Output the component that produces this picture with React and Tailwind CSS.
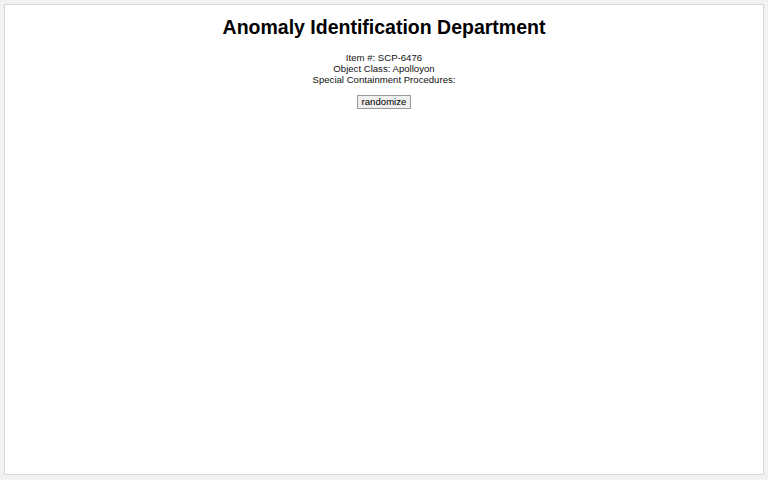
export default function App() {
  return (
    <div className="h-[480px] w-[768px] bg-[#f2f2f2] p-1 font-['Liberation_Sans',Arial,sans-serif]">
      <div className="flex h-[471px] flex-col items-center border border-[#d8d8d8] bg-white">
        <h1 className="mt-[11px] text-[19.5px] font-bold leading-[23px] text-black">
          Anomaly Identification Department
        </h1>
        <div className="mt-[13px] flex flex-col items-center text-[9.6px] leading-[11px] text-[#111]">
          <p>Item #: SCP-6476</p>
          <p>Object Class: Apolloyon</p>
          <p>Special Containment Procedures:</p>
        </div>
        <button className="mt-[10px] border border-[#9a9a9a] bg-[#efefef] px-[4px] text-[9.6px] leading-[12px] text-black">
          randomize
        </button>
      </div>
    </div>
  );
}
